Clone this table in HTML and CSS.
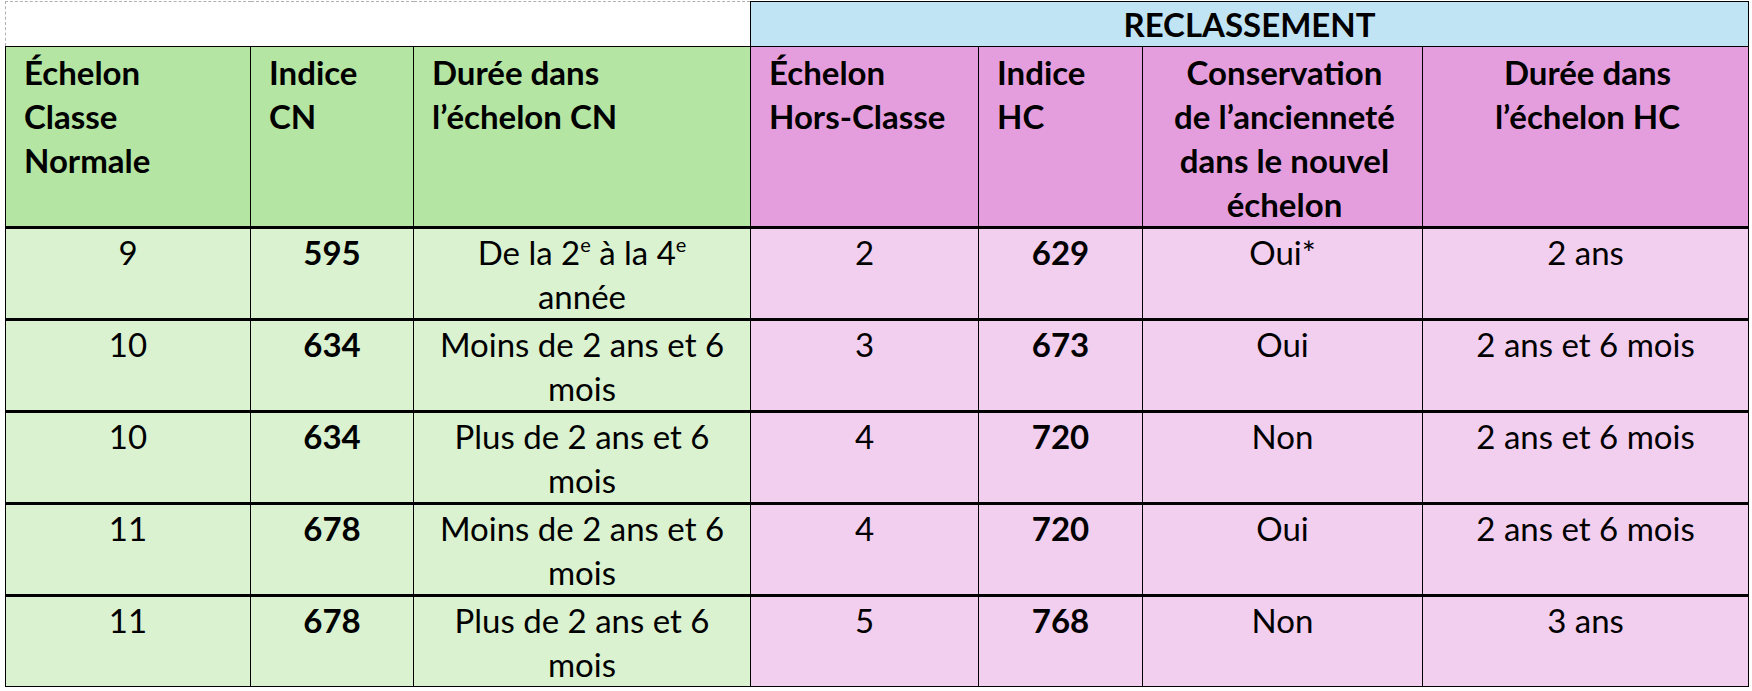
FILE: index.html
```html
<!DOCTYPE html>
<html lang="fr">
<head>
<meta charset="utf-8">
<title>Reclassement</title>
<link rel="stylesheet" href="styles.css">
</head>
<body>
<table class="grid">
  <colgroup>
    <col class="c1"><col class="c2"><col class="c3"><col class="c4"><col class="c5"><col class="c6"><col class="c7">
  </colgroup>
  <tr class="top">
    <td class="blank" colspan="3"></td>
    <td class="reclass" colspan="4">RECLASSEMENT</td>
  </tr>
  <tr class="head">
    <th class="g left">Échelon<br>Classe<br>Normale</th>
    <th class="g left">Indice<br>CN</th>
    <th class="g left">Durée dans<br>l’échelon CN</th>
    <th class="p left">Échelon<br>Hors-Classe</th>
    <th class="p left">Indice<br>HC</th>
    <th class="p">Conservation<br>de l’ancienneté<br>dans le nouvel<br>échelon</th>
    <th class="p">Durée dans<br>l’échelon HC</th>
  </tr>
  <tr class="row">
    <td class="lg">9</td><td class="lg b">595</td><td class="lg">De la 2<sup>e</sup> à la 4<sup>e</sup><br>année</td>
    <td class="lp">2</td><td class="lp b">629</td><td class="lp">Oui*</td><td class="lp">2 ans</td>
  </tr>
  <tr class="row">
    <td class="lg">10</td><td class="lg b">634</td><td class="lg">Moins de 2 ans et 6<br>mois</td>
    <td class="lp">3</td><td class="lp b">673</td><td class="lp">Oui</td><td class="lp">2 ans et 6 mois</td>
  </tr>
  <tr class="row">
    <td class="lg">10</td><td class="lg b">634</td><td class="lg">Plus de 2 ans et 6<br>mois</td>
    <td class="lp">4</td><td class="lp b">720</td><td class="lp">Non</td><td class="lp">2 ans et 6 mois</td>
  </tr>
  <tr class="row">
    <td class="lg">11</td><td class="lg b">678</td><td class="lg">Moins de 2 ans et 6<br>mois</td>
    <td class="lp">4</td><td class="lp b">720</td><td class="lp">Oui</td><td class="lp">2 ans et 6 mois</td>
  </tr>
  <tr class="row">
    <td class="lg">11</td><td class="lg b">678</td><td class="lg">Plus de 2 ans et 6<br>mois</td>
    <td class="lp">5</td><td class="lp b">768</td><td class="lp">Non</td><td class="lp">3 ans</td>
  </tr>
</table>
</body>
</html>
```
FILE: styles.css
```css
html, body {
  margin: 0;
  padding: 0;
  background: #ffffff;
}

body {
  font-family: Lato, "Open Sans", sans-serif;
  color: #000000;
  padding: 1px 0 0 5px;
}

.grid {
  border-collapse: collapse;
  table-layout: fixed;
  width: 1743px;
  font-size: 33px;
  line-height: 44px;
}

.c1 { width: 245px; }
.c2 { width: 163px; }
.c3 { width: 337px; }
.c4 { width: 228px; }
.c5 { width: 164px; }
.c6 { width: 280px; }
.c7 { width: 326px; }

.grid td, .grid th {
  border: 1px solid #000000;
  padding: 2px 14px 0 18px;
  vertical-align: top;
  text-align: center;
  font-weight: normal;
}

.top { height: 45px; }

.grid .blank {
  background: #ffffff;
  border-top: 1px dashed #b0b0b0;
  border-left: 1px dashed #b0b0b0;
}

.grid .reclass {
  background: #c1e4f5;
  font-weight: bold;
  vertical-align: middle;
  padding: 0;
  line-height: 42px;
}

.head { height: 179px; }

.grid .head th {
  font-weight: bold;
  border-bottom: 3px solid #000000;
  padding-top: 3px;
}

.grid .head th.left { text-align: left; }

.g { background: #b4e5a2; }
.p { background: #e59edd; }
.lg { background: #daf2d0; }
.lp { background: #f2ceef; }

.row { height: 88px; }

.grid .row td {
  border-bottom: 3px solid #000000;
  padding: 1px 10px 0;
}

.grid .row:last-child td {
  border-bottom: 1px solid #000000;
}

.grid td.b { font-weight: bold; }

sup {
  font-size: 20px;
  line-height: 0;
  vertical-align: 13px;
}
```
